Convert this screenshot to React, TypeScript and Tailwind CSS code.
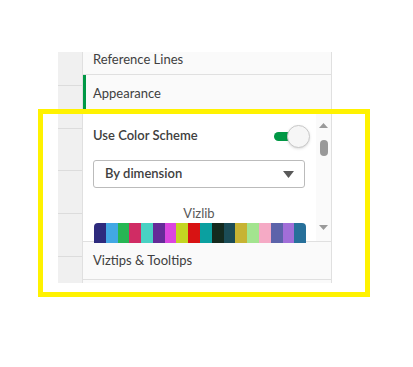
const swatches = [
  "#2d2a7d", "#42a8e4", "#27b654", "#d02c64", "#49d1c3", "#652b98",
  "#dc45df", "#c3d622", "#d81313", "#0ba0a0", "#142a1e", "#1b4c56",
  "#c7b333", "#a3e48f", "#f5aac5", "#5c63aa", "#a16ed8", "#27709a",
]

export default function App() {
  return (
    <div className="relative w-[413px] h-[367px] bg-white" style={{ fontFamily: "Lato, 'Open Sans', sans-serif" }}>
      <div className="absolute left-[58px] top-[52px] w-[274px] h-[231px] flex">
        {/* left strip */}
        <div className="w-[24px] bg-[#f0f0f0] flex flex-col">
          <div className="h-[34px] border-b border-[#dcdcdc]" />
          <div className="h-[43px] border-b border-[#dcdcdc]" />
          <div className="h-[42px] border-b border-[#dcdcdc]" />
          <div className="h-[43px] border-b border-[#dcdcdc]" />
          <div className="h-[43px] border-b border-[#dcdcdc]" />
        </div>
        {/* main panel */}
        <div className="flex-1 flex flex-col border-l border-r border-[#e0e0e0] bg-[#fafafa] overflow-hidden">
          <div className="h-[23px] shrink-0 border-b border-[#e0e0e0] flex items-end pb-[8px] pl-[10px] text-[13px] leading-[14px] text-[#404040]">
            Reference Lines
          </div>
          <div className="h-[38px] shrink-0 flex items-center border-l-[3px] border-[#009845] pl-[7px] text-[13px] text-[#404040]">
            Appearance
          </div>
          <div className="h-[128px] shrink-0 flex bg-white">
            <div className="flex-1 pl-[10px] pr-[11px] pt-[13px] relative">
              <div className="flex items-center justify-between h-[20px]">
                <span className="text-[13px] font-semibold text-[#404040]">Use Color Scheme</span>
                <div className="relative w-[36px] h-[20px] mr-[-5px]">
                  <div className="absolute left-[0px] top-[6px] w-[28px] h-[9px] rounded-full bg-[#009845]" />
                  <div className="absolute right-[0px] top-[-1px] w-[23px] h-[23px] rounded-full bg-[#f6f6f6] border border-[#c8c8c8] shadow-sm" />
                </div>
              </div>
              <div className="mt-[14px] h-[28px] border border-[#bbbbbb] rounded-[3px] flex items-center justify-between pl-[11px] pr-[10px] text-[13px] font-semibold text-[#404040]">
                <span>By dimension</span>
                <svg width="11" height="7" viewBox="0 0 11 7"><path d="M0 0h11L5.5 7z" fill="#595959" /></svg>
              </div>
              <div className="mt-[17px] text-center text-[13px] text-[#595959] leading-[16px]">Vizlib</div>
              <div className="mt-[2px] flex h-[20px] rounded-t-[4px] overflow-hidden ml-[1px] mr-[-1px]">
                {swatches.map((c) => (
                  <div key={c} className="flex-1" style={{ background: c }} />
                ))}
              </div>
            </div>
            {/* scrollbar */}
            <div className="w-[15px] bg-[#fafafa] flex flex-col items-center">
              <svg className="mt-[10px]" width="9" height="5" viewBox="0 0 9 5"><path d="M0 5h9L4.5 0z" fill="#9a9a9a" /></svg>
              <div className="mt-[12px] w-[8px] h-[16px] rounded-full bg-[#999999]" />
              <div className="flex-1" />
              <svg className="mb-[11px]" width="9" height="5" viewBox="0 0 9 5"><path d="M0 0h9L4.5 5z" fill="#9a9a9a" /></svg>
            </div>
          </div>
          <div className="h-[39px] shrink-0 border-t border-b border-[#e0e0e0] flex items-center pl-[10px] text-[13px] text-[#404040]">
            Viztips &amp; Tooltips
          </div>
        </div>
      </div>
      {/* highlight frame */}
      <div className="absolute left-[38px] top-[109px] w-[332px] h-[188px] border-[5px] border-[#fff200]" />
    </div>
  )
}
